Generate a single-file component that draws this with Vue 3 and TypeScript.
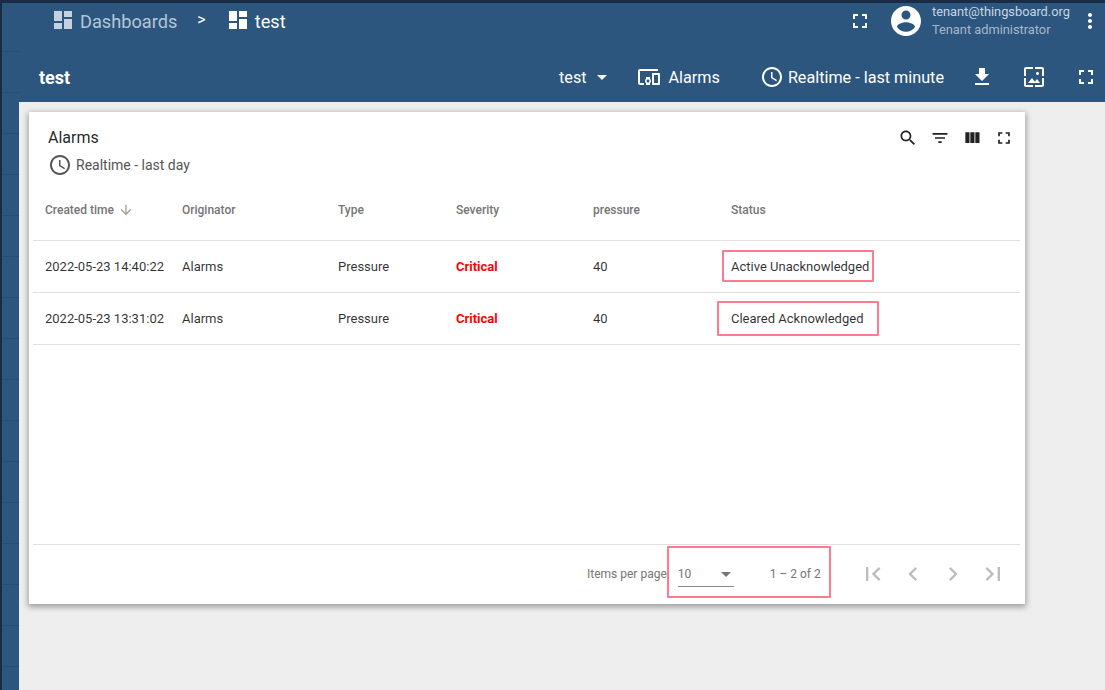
<template>
  <div class="page">
    <div class="top-edge"></div>
    <div class="body">
      <div class="rail">
        <div v-for="n in 16" :key="n" class="rail-item"></div>
      </div>
      <main class="main">
        <header class="header">
          <div class="crumbs">
            <nav class="breadcrumb">
              <svg class="icon dim" viewBox="0 0 24 24"><path :d="icons.dashboard" /></svg>
              <span class="crumb muted">Dashboards</span>
              <span class="sep">&gt;</span>
              <svg class="icon" viewBox="0 0 24 24"><path :d="icons.dashboard" /></svg>
              <span class="crumb">test</span>
            </nav>
            <div class="user">
              <svg class="icon" viewBox="0 0 24 24"><path :d="icons.fullscreen" /></svg>
              <svg class="icon avatar" viewBox="0 0 24 24"><path :d="icons.account" /></svg>
              <div class="user-text">
                <div class="user-mail">tenant@thingsboard.org</div>
                <div class="user-role">Tenant administrator</div>
              </div>
              <svg class="icon more" viewBox="0 0 24 24"><path :d="icons.more" /></svg>
            </div>
          </div>
          <div class="toolbar">
            <h1 class="title">test</h1>
            <div class="actions">
              <span class="label">test</span>
              <svg class="icon drop" viewBox="0 0 24 24"><path :d="icons.drop" /></svg>
              <svg class="icon devices" viewBox="0 0 24 24"><path :d="icons.devices" /></svg>
              <span class="label">Alarms</span>
              <svg class="icon clock" viewBox="0 0 24 24"><path :d="icons.schedule" /></svg>
              <span class="label">Realtime - last minute</span>
              <svg class="icon download" viewBox="0 0 24 24"><path :d="icons.download" /></svg>
              <svg class="icon wallpaper" viewBox="0 0 24 24"><path :d="icons.wallpaper" /></svg>
              <svg class="icon expand" viewBox="0 0 24 24"><path :d="icons.fullscreen" /></svg>
            </div>
          </div>
        </header>

        <section class="content">
          <div class="card">
            <div class="card-head">
              <div>
                <div class="card-title">Alarms</div>
                <div class="card-window">
                  <svg class="icon" viewBox="0 0 24 24"><path :d="icons.schedule" /></svg>
                  <span>Realtime - last day</span>
                </div>
              </div>
              <div class="card-tools">
                <svg v-for="t in tools" :key="t" class="icon" viewBox="0 0 24 24"><path :d="icons[t]" /></svg>
              </div>
            </div>

            <div class="table">
              <div class="row head-row">
                <div v-for="c in columns" :key="c" class="cell">
                  {{ c }}
                  <svg v-if="c === 'Created time'" class="icon sort" viewBox="0 0 24 24"><path :d="icons.arrowDown" /></svg>
                </div>
              </div>
              <div v-for="a in alarms" :key="a.time" class="row data-row">
                <div class="cell">{{ a.time }}</div>
                <div class="cell">Alarms</div>
                <div class="cell">Pressure</div>
                <div class="cell critical">Critical</div>
                <div class="cell">40</div>
                <div class="cell">{{ a.status }}</div>
              </div>
            </div>

            <div class="paginator">
              <span class="per-page">Items per page:</span>
              <div class="select">
                <span>10</span>
                <svg class="icon" viewBox="0 0 24 24"><path :d="icons.drop" /></svg>
              </div>
              <span class="range">1 – 2 of 2</span>
              <div class="pager">
                <svg v-for="p in pager" :key="p" class="icon" viewBox="0 0 24 24"><path :d="icons[p]" /></svg>
              </div>
            </div>
          </div>
        </section>
      </main>
    </div>

    <!-- red annotation frames drawn over the screenshot -->
    <div class="mark mark-a"></div>
    <div class="mark mark-b"></div>
    <div class="mark mark-c"></div>
  </div>
</template>

<script setup lang="ts">
const icons: Record<string, string> = {
  dashboard: 'M3 13h8V3H3v10zm0 8h8v-6H3v6zm10 0h8V11h-8v10zm0-18v6h8V3h-8z',
  fullscreen: 'M7 14H5v5h5v-2H7v-3zm-2-4h2V7h3V5H5v5zm12 7h-3v2h5v-5h-2v3zM14 5v2h3v3h2V5h-5z',
  account:
    'M12 2C6.48 2 2 6.48 2 12s4.48 10 10 10 10-4.48 10-10S17.52 2 12 2zm0 3c1.66 0 3 1.34 3 3s-1.34 3-3 3-3-1.34-3-3 1.34-3 3-3zm0 14.2c-2.5 0-4.71-1.28-6-3.22.03-1.99 4-3.08 6-3.08 1.99 0 5.97 1.09 6 3.08-1.29 1.94-3.5 3.22-6 3.22z',
  more: 'M12 8c1.1 0 2-.9 2-2s-.9-2-2-2-2 .9-2 2 .9 2 2 2zm0 2c-1.1 0-2 .9-2 2s.9 2 2 2 2-.9 2-2-.9-2-2-2zm0 6c-1.1 0-2 .9-2 2s.9 2 2 2 2-.9 2-2-.9-2-2-2z',
  drop: 'M7 10l5 5 5-5z',
  devices:
    'M3 6h18V4H3c-1.1 0-2 .9-2 2v12c0 1.1.9 2 2 2h4v-2H3V6zm10 6H9v1.78c-.61.55-1 1.33-1 2.22s.39 1.67 1 2.22V20h4v-1.78c.61-.55 1-1.34 1-2.22s-.39-1.67-1-2.22V12zm-2 5.5c-.83 0-1.5-.67-1.5-1.5s.67-1.5 1.5-1.5 1.5.67 1.5 1.5-.67 1.5-1.5 1.5zM22 8h-6c-.5 0-1 .5-1 1v10c0 .5.5 1 1 1h6c.5 0 1-.5 1-1V9c0-.5-.5-1-1-1zm-1 10h-4v-8h4v8z',
  schedule:
    'M11.99 2C6.47 2 2 6.48 2 12s4.47 10 9.99 10C17.52 22 22 17.52 22 12S17.52 2 11.99 2zM12 20c-4.42 0-8-3.58-8-8s3.58-8 8-8 8 3.58 8 8-3.58 8-8 8zm.5-13H11v6l5.25 3.15.75-1.23-4.5-2.67z',
  download: 'M19 9h-4V3H9v6H5l7 7 7-7zM5 18v2h14v-2H5z',
  wallpaper:
    'M4 4h7V2H4c-1.1 0-2 .9-2 2v7h2V4zm6 9l-4 5h12l-3-4-2.03 2.71L10 13zm7-4.5c0-.83-.67-1.5-1.5-1.5S14 7.67 14 8.5s.67 1.5 1.5 1.5S17 9.33 17 8.5zM20 2h-7v2h7v7h2V4c0-1.1-.9-2-2-2zm0 18h-7v2h7c1.1 0 2-.9 2-2v-7h-2v7zM4 13H2v7c0 1.1.9 2 2 2h7v-2H4v-7z',
  search:
    'M15.5 14h-.79l-.28-.27C15.41 12.59 16 11.11 16 9.5 16 5.91 13.09 3 9.5 3S3 5.91 3 9.5 5.91 16 9.5 16c1.61 0 3.09-.59 4.23-1.57l.27.28v.79l5 4.99L20.49 19l-4.99-5zm-6 0C7.01 14 5 11.99 5 9.5S7.01 5 9.5 5 14 7.01 14 9.5 11.99 14 9.5 14z',
  filter: 'M10 18h4v-2h-4v2zM3 6v2h18V6H3zm3 7h12v-2H6v2z',
  columns: 'M10 18h5V5h-5v13zm-6 0h5V5H4v13zM16 5v13h5V5h-5z',
  arrowDown: 'M20 12l-1.41-1.41L13 16.17V4h-2v12.17l-5.58-5.59L4 12l8 8 8-8z',
  first: 'M18.41 16.59L13.82 12l4.59-4.59L17 6l-6 6 6 6zM6 6h2v12H6z',
  prev: 'M15.41 7.41L14 6l-6 6 6 6 1.41-1.41L10.83 12z',
  next: 'M10 6L8.59 7.41 13.17 12l-4.58 4.59L10 18l6-6z',
  last: 'M5.59 7.41L10.18 12l-4.59 4.59L7 18l6-6-6-6zM16 6h2v12h-2z',
}

const tools = ['search', 'filter', 'columns', 'fullscreen']
const pager = ['first', 'prev', 'next', 'last']
const columns = ['Created time', 'Originator', 'Type', 'Severity', 'pressure', 'Status']

const alarms = [
  { time: '2022-05-23 14:40:22', status: 'Active Unacknowledged' },
  { time: '2022-05-23 13:31:02', status: 'Cleared Acknowledged' },
]
</script>

<style>
html,
body {
  margin: 0;
  overflow: hidden;
}
</style>

<style scoped>
.page {
  position: relative;
  width: 1105px;
  height: 690px;
  overflow: hidden;
  font-family: Roboto, 'Liberation Sans', sans-serif;
  background: #eeeeee;
}
.icon {
  display: block;
  flex: none;
  width: 24px;
  height: 24px;
  fill: currentColor;
}
.top-edge {
  height: 3px;
  background: #1a2b45;
}
.body {
  display: flex;
  height: 687px;
}

/* collapsed side menu */
.rail {
  flex: none;
  width: 17px;
  border-left: 2px solid #1a2b45;
  background: #2c567e;
}
.rail-item {
  height: 40px;
  border-bottom: 1px solid #264c72;
}
.rail-item:first-child {
  height: 48px;
}

.main {
  flex: 1;
  min-width: 0;
}
.header {
  height: 99px;
  background: #2c567e;
  color: #fff;
}
.crumbs {
  display: flex;
  justify-content: space-between;
  height: 49px;
}
.breadcrumb {
  display: flex;
  align-items: center;
  height: 34px;
  padding-left: 32px;
}
.crumb {
  margin-left: 5px;
  padding-top: 2px;
  font-size: 18.2px;
}
.dim {
  color: #c5d1de;
}
.muted {
  color: #b5c5d6;
}
.sep {
  margin: 0 20px;
  padding-bottom: 1px;
  font-size: 16px;
}
.user {
  display: flex;
  align-items: center;
  height: 36px;
  padding-right: 3px;
}
.avatar {
  width: 36px;
  height: 36px;
  margin: 0 8px 0 16px;
}
.user-text {
  width: 146px;
  padding-bottom: 1px;
  font-size: 12.8px;
  line-height: 18px;
  color: #c9d5e1;
}
.user-role {
  color: #a5b9cd;
}
.toolbar {
  display: flex;
  justify-content: space-between;
  align-items: center;
  height: 50px;
  padding: 0 7px 0 20px;
}
.title {
  margin: 0;
  font-size: 18px;
  font-weight: 700;
}
.actions {
  display: flex;
  align-items: center;
  font-size: 16.2px;
}
.label {
  padding-top: 1px;
}
.drop {
  margin: 0 23px 0 3px;
}
.devices {
  margin-right: 8px;
}
.clock {
  margin: 0 4px 0 40px;
}
.download {
  margin-left: 26px;
}
.wallpaper {
  margin-left: 28px;
}
.expand {
  margin-left: 28px;
}

.content {
  padding: 10px 0 0 10px;
}
.card {
  width: 996px;
  height: 492px;
  display: flex;
  flex-direction: column;
  background: #fff;
  box-shadow: 0 2px 6px 1px rgba(0, 0, 0, 0.35);
}
.card-head {
  display: flex;
  justify-content: space-between;
  height: 68px;
  padding: 15px 11px 0 19px;
  box-sizing: border-box;
}
.card-title {
  font-size: 16px;
  line-height: 22px;
  color: rgba(0, 0, 0, 0.87);
}
.card-window {
  display: flex;
  align-items: center;
  gap: 4px;
  margin-top: 4px;
  font-size: 14px;
  color: #555;
}
.card-tools {
  display: flex;
  gap: 12px;
  margin-top: 1px;
  color: #212121;
}
.card-tools .icon {
  width: 20px;
  height: 20px;
}

.table {
  flex: 1;
  margin: 0 5px 0 4px;
  font-size: 12px;
}
.row {
  display: grid;
  grid-template-columns: 137px 156px 118px 137px 138px 1fr;
  align-items: center;
  border-bottom: 1px solid #e0e0e0;
}
.head-row {
  height: 61px;
  box-sizing: border-box;
  font-weight: 500;
  color: #757575;
}
.data-row {
  height: 52px;
  box-sizing: border-box;
  font-size: 13px;
  color: rgba(0, 0, 0, 0.82);
}
.cell {
  display: flex;
  align-items: center;
  padding-left: 12px;
  white-space: nowrap;
}
.sort {
  width: 16px;
  height: 16px;
  margin-left: 4px;
  color: #9e9e9e;
}
.critical {
  font-weight: 700;
  color: #ff0000;
}

.paginator {
  display: flex;
  align-items: center;
  height: 60px;
  margin: 0 5px 0 4px;
  padding-bottom: 2px;
  border-top: 1px solid #e0e0e0;
  box-sizing: border-box;
  font-size: 12px;
  color: #757575;
}
.per-page {
  margin-left: 554px;
}
.select {
  display: flex;
  align-items: center;
  justify-content: space-between;
  width: 56px;
  height: 24px;
  margin-left: 8px;
  margin-top: 1px;
  border-bottom: 1px solid #8a8a8a;
}
.select .icon {
  margin-right: -4px;
}
.range {
  margin-left: 36px;
}
.pager {
  display: flex;
  gap: 12px;
  margin-left: 38px;
  color: #bdbdbd;
}
.pager .icon {
  width: 28px;
  height: 28px;
}

.mark {
  position: absolute;
  box-sizing: border-box;
  border: 2px solid #ff7a90;
  border-radius: 1px;
}
.mark-a {
  left: 722px;
  top: 250px;
  width: 152px;
  height: 32px;
}
.mark-b {
  left: 717px;
  top: 301px;
  width: 162px;
  height: 35px;
}
.mark-c {
  left: 667px;
  top: 546px;
  width: 164px;
  height: 52px;
}
</style>
